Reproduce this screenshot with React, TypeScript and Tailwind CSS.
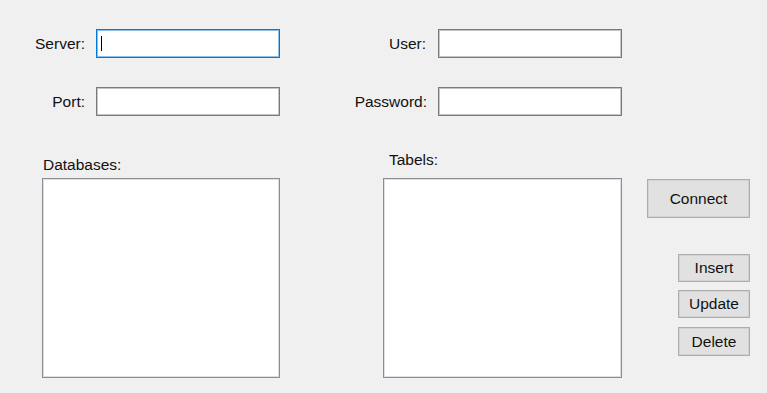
import React from "react";

const font = { fontFamily: '"Liberation Sans", Arial, sans-serif' };

function TextBox({ focused }: { focused?: boolean }) {
  return (
    <div
      className={`w-[184px] h-[29px] bg-white border flex items-center ${
        focused
          ? "border-[#0078d7] shadow-[inset_0_0_0_1px_#8cc0ec]"
          : "border-[#7a7a7a] shadow-[inset_0_0_0_1px_#c4c4c4]"
      }`}
    >
      {focused && <span className="ml-[4px] w-[1px] h-[15px] bg-black" />}
    </div>
  );
}

function Btn({ label, w, h }: { label: string; w: string; h: string }) {
  return (
    <button
      className={`${w} ${h} bg-[#e1e1e1] border border-[#adadad] shadow-[inset_0_0_0_1px_#d2d2d2] text-[15.5px] text-[#111] flex items-center justify-center leading-none`}
    >
      {label}
    </button>
  );
}

export default function App() {
  return (
    <div
      className="w-[767px] h-[393px] bg-[#f0f0f0] text-[#111] text-[15.5px] overflow-hidden"
      style={font}
    >
      <div className="pt-[29px] flex flex-col gap-[29px]">
        <div className="flex items-center">
          <div className="w-[85px] text-right">Server:</div>
          <div className="ml-[11px]">
            <TextBox focused />
          </div>
          <div className="w-[146px] text-right">User:</div>
          <div className="ml-[12px]">
            <TextBox />
          </div>
        </div>
        <div className="flex items-center">
          <div className="w-[85px] text-right">Port:</div>
          <div className="ml-[11px]">
            <TextBox />
          </div>
          <div className="w-[147px] text-right">Password:</div>
          <div className="ml-[11px]">
            <TextBox />
          </div>
        </div>
      </div>
      <div className="mt-[35px] flex pl-[42px]">
        <div className="w-[238px] pt-[5px] flex flex-col">
          <div className="h-[18px] leading-[18px] pl-[1px]">Databases:</div>
          <div className="mt-[4px] h-[200px] bg-white border border-[#8a8e94] shadow-[inset_0_0_0_1px_#dcdfe3]" />
        </div>
        <div className="ml-[103px] w-[239px] flex flex-col">
          <div className="h-[18px] leading-[18px] pl-[6px]">Tabels:</div>
          <div className="mt-[9px] h-[200px] bg-white border border-[#8a8e94] shadow-[inset_0_0_0_1px_#dcdfe3]" />
        </div>
        <div className="ml-[25px] w-[103px] flex flex-col items-end">
          <div className="mt-[28px]">
            <Btn label="Connect" w="w-[103px]" h="h-[39px]" />
          </div>
          <div className="mt-[36px]">
            <Btn label="Insert" w="w-[72px]" h="h-[28px]" />
          </div>
          <div className="mt-[8px]">
            <Btn label="Update" w="w-[72px]" h="h-[28px]" />
          </div>
          <div className="mt-[9px]">
            <Btn label="Delete" w="w-[72px]" h="h-[29px]" />
          </div>
        </div>
      </div>
    </div>
  );
}
